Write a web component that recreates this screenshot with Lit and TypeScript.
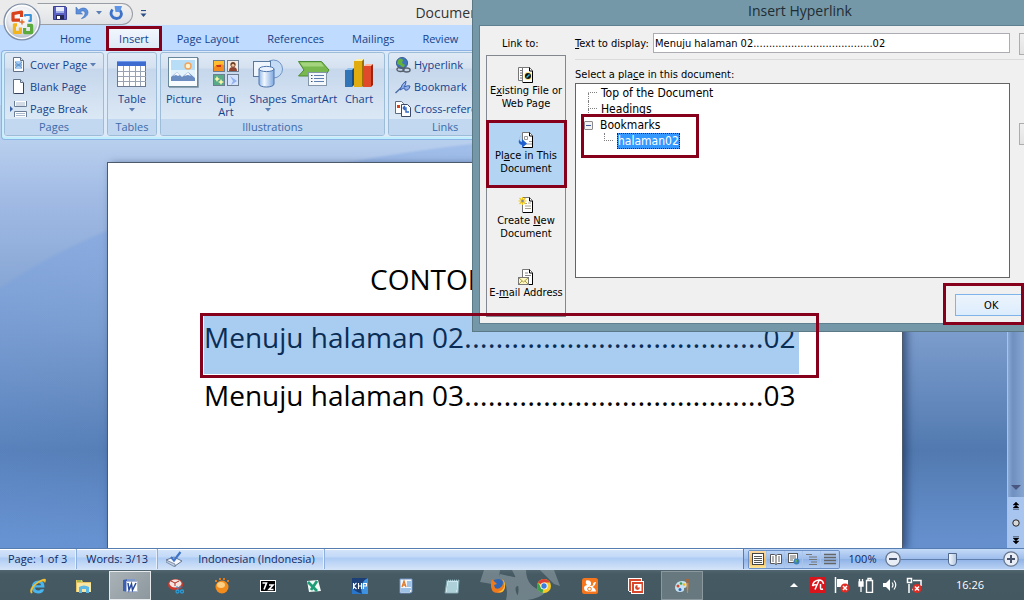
import { LitElement, html, css, svg } from "lit";
import { customElement } from "lit/decorators.js";

const icon = (w: number, h: number, body: unknown) =>
  html`<svg width=${w} height=${h} viewBox="0 0 ${w} ${h}" aria-hidden="true">${body}</svg>`;

const orb = icon(40, 40, svg`
  <defs>
    <radialGradient id="orb" cx=".5" cy=".35" r=".65">
      <stop offset="0" stop-color="#ffffff"/><stop offset=".6" stop-color="#e6e9ee"/><stop offset="1" stop-color="#a9b4c4"/>
    </radialGradient>
  </defs>
  <circle cx="20" cy="20" r="18" fill="url(#orb)" stroke="#7c8da5" stroke-width="1.2"/>
  <circle cx="20" cy="20" r="16.4" fill="none" stroke="#fff" stroke-width="1.2"/>
  <g fill="none" stroke-width="3.2" stroke-linejoin="round">
    <path d="M18 18.200h-7v-6.600l8.500-1.600v5" stroke="#d8431c"/>
    <path d="M23 14.600v-1.600h5.800v5.800h-2.400" stroke="#3d93d8" stroke-width="2.200"/>
    <path d="M15 22.800h-2.600v7.600h6v-5" stroke="#f4b41c"/>
    <path d="M22.600 26v4.600h7v-7.200h-4.400" stroke="#5aab3c"/>
  </g>
  <path d="M20 17.500v5M17.500 20h5" stroke="#e06a2a" stroke-width="1.400"/>`);

const save = icon(16, 16, svg`
  <path d="M1.500 1.500h12l1 1v12h-13z" fill="#5a5fc4" stroke="#3b3f92"/>
  <rect x="4" y="2" width="8" height="6" fill="#e8ecfb"/><path d="M4 6h8v2H4z" fill="#9fb0e8"/>
  <rect x="4" y="10" width="8" height="4.500" fill="#26284f"/><rect x="5" y="11" width="3" height="3" fill="#fff"/>`);
const undo = icon(14, 16, svg`
  <path d="M1 2v7h6.500L5.400 7c2-2 4.800-1.200 4.600 1.600-.2 2-1.600 3.400-3.600 5 4-.8 6.400-3 6.600-6C13.200 3 7.600 1.400 3.600 5z" fill="#5b8edb" stroke="#3f6fba" stroke-width=".6"/>`);
const redo = icon(15, 16, svg`
  <path d="M3.500 4.500C0 9 3.500 13.500 7.500 13.500S14.500 9 10.500 5" fill="none" stroke="#3c72c8" stroke-width="2.800"/>
  <path d="M5.500 1h7.500l-.5 1.800-2 4.200H6.500z" fill="#5f95e4"/>`);
const caret = icon(6, 4, svg`<path d="M0 0h6L3 3.500z" fill="#5b7fb4"/>`);
const customise = icon(7, 8, svg`<path d="M1 .5h5" stroke="#2c4f86" stroke-width="1.200"/><path d="M.5 3.500h6L3.500 7z" fill="#2c4f86"/>`);

const sheet = svg`<path d="M2.500.5h7l3 3v11h-10z" fill="#fff" stroke="#5f6f86"/><path d="M9.500.5v3h3" fill="#d5deea" stroke="#5f6f86"/>`;
const coverPage = icon(15, 16, svg`${sheet}<path d="M4 4h7v8H4z" fill="#a9cdf0"/><path d="M4 5l7 6M4 11l7-6M4 8h7" stroke="#4b86c6" stroke-width=".8"/>`);
const blankPage = icon(15, 16, svg`${sheet}<path d="M12.500 4v10.500h-9" stroke="#33415c" fill="none"/>`);
const pageBreak = icon(17, 16, svg`
  <path d="M0 5l3 3L0 11z" fill="#3a62a8"/>
  <path d="M4.500 0v5.500h12V0M4.500 16v-5.500h12V16" fill="#fff" stroke="#6b7c95"/>
  <path d="M6 2h9M6 4h9M6 12.500h9M6 14.500h9" stroke="#a8b8cf"/>`);
const table = icon(30, 30, svg`
  <rect x=".5" y="4.500" width="28" height="24" fill="#fff" stroke="#6a7891"/>
  <rect x="0" y="3" width="29" height="5" fill="#3e6bd0"/><path d="M0 3.500h29" stroke="#6f97ec"/>
  <path d="M6.500 8v20M12.500 8v20M18.500 8v20M23.500 8v20M1 13.500h28M1 18.500h28M1 23.500h28" stroke="#9aa3b4"/>`);
const picture = icon(32, 32, svg`
  <rect x=".5" y=".5" width="29" height="29" fill="#f8fbfd" stroke="#68879b"/>
  <rect x="3" y="3" width="24" height="21" fill="#b7ddf7"/><rect x="3" y="13" width="24" height="8" fill="#e4f2fb"/>
  <circle cx="20" cy="9" r="3" fill="#fff4d0" stroke="#f3a45c" stroke-width="1.400"/>
  <path d="M3 24v-4l6-5 5 5 6-5 7 6v3z" fill="#6b8dc2"/><path d="M9 15l-4 4 3-1 2 1 2-1zM20 15l-4 4 4-1 3 1z" fill="#f3f7fc"/>
  <path d="M1 30.500h29.500V1" stroke="#8fa2b4" fill="none"/>`);
const clipArt = icon(27, 27, svg`
  <g stroke="#6c7d8f"><rect x=".5" y=".5" width="11" height="11" fill="#ffbf30"/><rect x="14.500" y=".5" width="11" height="11" fill="#f4ece2"/>
  <rect x=".5" y="14.500" width="11" height="11" fill="#58ab88"/><rect x="14.500" y="14.500" width="11" height="11" fill="#d4e2fb"/></g>
  <path d="M1 7q5-4 10-2v6H1z" fill="#f58a1e"/><path d="M3 5h5v2H4z" fill="#c8341c"/>
  <circle cx="20" cy="4.500" r="2.600" fill="#6b3a24"/><circle cx="20" cy="5.200" r="1.500" fill="#f1c39a"/><path d="M16 11q0-4 4-4t4 4z" fill="#8e4430"/>
  <path d="M4 16l1 2 2 1-2 1-1 2-1-2-1.500-1 1.500-1zM8 19l1 2 2 1-2 1-1 2-1-2-2-1 2-1z" fill="#f8f4a8"/>
  <path d="M17 16l7 5-6 4 2-4z" fill="#8fb1ee"/>`);
const shapes = icon(31, 29, svg`
  <defs><linearGradient id="cyl"><stop stop-color="#8fb6e8"/><stop offset=".35" stop-color="#f2f8ff"/><stop offset="1" stop-color="#7ca6e0"/></linearGradient></defs>
  <circle cx="20.500" cy="10" r="9" fill="#c4dbf6" stroke="#6f93c4"/>
  <rect x=".5" y="2.500" width="17" height="15" fill="#eef5fd" stroke="#58789e"/>
  <path d="M6 10v15c0 4 15 4 15 0V10" fill="url(#cyl)" stroke="#4f76ac"/><ellipse cx="13.500" cy="10" rx="7.500" ry="2.600" fill="#eaf3fd" stroke="#4f76ac"/>`);
const smartArt = icon(32, 28, svg`
  <path d="M.5 2.500h23L31 11l-4 6H.5L6 11z" fill="#79b84f" stroke="#4c8a33"/><path d="M2 3.500h21l3 4H5z" fill="#a4d57e"/>
  <rect x="10.500" y="13.500" width="18" height="13" fill="#f5f8fb" stroke="#8497a8"/>
  <path d="M16 16.500h10M16 19.500h10M16 22.500h10" stroke="#5d7fae"/><path d="M13 16.500h1.500M13 19.500h1.500M13 22.500h1.500" stroke="#344f7a"/>`);
const chart = icon(29, 30, svg`
  <path d="M0 13l3-3h6l-2 3z" fill="#8ec2ee"/><rect y="12" width="7" height="17" fill="#2f75b8"/><path d="M7 12l2-2v17l-2 2z" fill="#164f86"/>
  <path d="M9 4l3-3h7l-2 3z" fill="#fff0a0"/><rect x="9" y="3" width="8" height="26" fill="#e0ac10"/><path d="M17 3l2-2v26l-2 2z" fill="#9b7100"/>
  <path d="M18 9l3-3h7l-2 3z" fill="#ffb59e"/><rect x="18" y="8" width="8" height="21" fill="#e0492c"/><path d="M26 8l2-2v21l-2 2z" fill="#9d2410"/>`);
const hyperlink = icon(16, 16, svg`
  <circle cx="7" cy="6" r="5.600" fill="#3f73bb" stroke="#284f88" stroke-width=".8"/><path d="M3 3q3-3 5 0l-1 3 3 2-2 3-3-3-3-1z" fill="#63b23a"/>
  <g fill="none" stroke="#56606d" stroke-width="1.300"><ellipse cx="5.500" cy="12.500" rx="3.600" ry="2"/><ellipse cx="11.500" cy="13" rx="3.600" ry="2"/></g>`);
const bookmark = icon(16, 16, svg`
  <path d="M.5 14L8 7" stroke="#4a6aa0" stroke-width="1.400"/><path d="M5 11q2-7 6-9 0 4-2 6 4-2 6-1-1 5-5 4 0-2-1-2-2 1-4 2z" fill="#8fb0ea" stroke="#3a5fae"/>`);
const crossRef = icon(16, 16, svg`
  <path d="M.5.5h6l2 2v10h-8z" fill="#fff" stroke="#5c6c84"/><rect x="2" y="4" width="3" height="3" fill="#d8431c"/>
  <path d="M6.500 3.500h6l3 3v9h-9z" fill="#fff" stroke="#3b4a66"/><path d="M8 7h3v4h3M8 7l2-2M8 7l2 2" stroke="#3567c0" fill="none" stroke-width="1.400"/>`);

const page16 = svg`<path d="M4.500.5h7l3 3v12h-10z" fill="#fff" stroke="#777"/><path d="M14.500 4v11.500H5" stroke="#000" fill="none"/><path d="M11.500.5v3.500h3" fill="none" stroke="#000"/>`;
const existingFile = icon(16, 16, svg`<path d="M.5.5h9v13h-9z" fill="#fff" stroke="#777"/><path d="M2 3.500h2M2 6h2M2 8.500h2M2 11h2" stroke="#777"/>${page16}
  <circle cx="10" cy="9" r="4" fill="#ffe98a"/><circle cx="10" cy="9" r="3" fill="#111"/><path d="M8 10l3-3 1 1-3 3z" fill="#35b8d8"/>`);
const placeIn = icon(16, 16, svg`${page16}<path d="M6.500 4.500h3v3h-3zM11 9.500h3M6 12h8" stroke="#999" fill="none"/>
  <path d="M3 3Q-1 9 4 10V7l5 4.500L4 16v-3Q-2 12 3 3z" fill="#1f5fd0"/>`);
const createNew = icon(16, 16, svg`${page16}<path d="M7 6.500h2M7 9h6M7 11.500h6M10 6h3" stroke="#aaa08a"/>
  <path d="M4.500 0v8M.5 4h8M1.500 1l6 6M7.500 1l-6 6" stroke="#f0c61c" stroke-width="1.200"/><circle cx="4.500" cy="4" r="1.200" fill="#888"/>`);
const email = icon(16, 16, svg`${page16}<path d="M7 4h3M7 6.500h6" stroke="#888"/>
  <rect x=".5" y="8.500" width="10" height="7" fill="#fff7c0" stroke="#777"/><path d="M1 9l4.500 4L10 9M1 15l3-3M10 15l-3-3" stroke="#a89d48" fill="none"/>`);

const proof = icon(17, 16, svg`
  <path d="M0 9l8-3 8 4-7 5z" fill="#f5f8fc" stroke="#63748e"/><path d="M0 9l9 4v3L0 11z" fill="#c0cde2" stroke="#63748e" stroke-width=".7"/>
  <path d="M5 6l3 3.500L14.500 1" fill="none" stroke="#3f74c8" stroke-width="2.200"/>`);
const viewPrint = icon(12, 12, svg`<rect x=".5" y=".5" width="11" height="11" fill="#fff" stroke="#444"/><path d="M2 3.500h8M2 5.500h8M2 7.500h8M2 9.500h8" stroke="#555"/>`);
const viewRead = icon(12, 12, svg`<path d="M.5 1.500h4l1.500 1 1.500-1h4v9h-4L6 11.500l-1.500-1h-4zM6 2.500v9" fill="#fff" stroke="#555"/><path d="M2 4h2M2 6h2M2 8h2M8 4h2M8 6h2M8 8h2" stroke="#666"/>`);
const viewWeb = icon(12, 12, svg`<rect x=".5" y=".5" width="9" height="9" fill="#fff" stroke="#555"/><path d="M2 3h6M2 5h6M2 7h3" stroke="#666"/><circle cx="8.500" cy="8.500" r="3" fill="#3c7fb8"/><path d="M7 7q2-1 2 1l-1 2z" fill="#69b548"/>`);
const viewOutline = icon(12, 12, svg`<path d="M0 1.500h6M3 4h8M3 6.500h8M5 9h6M3 11.500h8" stroke="#777"/>`);
const viewDraft = icon(12, 12, svg`<path d="M0 1.500h12M0 4.500h12M0 7.500h12M0 10.500h12" stroke="#666" stroke-width="1.400"/>`);
const zoomGlyph = (plus: boolean) => icon(16, 16, svg`
  <circle cx="8" cy="8" r="7.200" fill="#e9eef6" stroke="#66758c" stroke-width="1.300"/><path d="M4 8h8" stroke="#46536a" stroke-width="2"/>
  ${plus ? svg`<path d="M8 4v8" stroke="#46536a" stroke-width="2"/>` : ""}`);

const taskIcons: { name: string; state?: string; art: unknown }[] = [
  { name: "Internet Explorer", art: svg`<path d="M14.500 9.500H5q.3 3 3.200 3 1.900 0 2.600-1.300h3.300Q13 15.500 8.300 15.500q-6.300 0-6.600-6.500.4-6.500 6.800-6.500 6.500 0 6 7zM5 7.300h6.200Q10.800 5 8.300 5T5 7.300z" fill="#49b5ee"/><path d="M1 15.500Q-2 11 6 5q7-5 9.500-4 1 1-.5 4Q14 1 7 6 1 11 2.500 15z" fill="#f2c02c"/>` },
  { name: "File Explorer", art: svg`<path d="M0 2h6l1 2h8v10H0z" fill="#e8c561"/><path d="M1 5h14v9H1z" fill="#f8e7a4"/><path d="M3 15V9q5-3 10 0v6h-3v-4H6v4z" fill="#5cb8e4"/><path d="M1 3h4" stroke="#5caf3d"/>` },
  { name: "Word", state: "active", art: svg`<path d="M1 2l5-1v13l-5-1z" fill="#3e60b4"/><path d="M5 1h8v2H5z" fill="#7d97cf"/><rect x="4.500" y="3.500" width="11" height="10" fill="#fff" stroke="#aab8d8"/><path d="M6 5l1 7 2.500-6 1 6L14 5" fill="none" stroke="#2a4b9b" stroke-width="1.500"/>` },
  { name: "Disk tool", art: svg`<ellipse cx="7.500" cy="6.500" rx="7.500" ry="5.500" fill="#d03a2c"/><ellipse cx="7.500" cy="5.500" rx="6" ry="4" fill="#f3e6e0"/><path d="M7 5L3 3M7 5l4-2M7 5v3" stroke="#b02a20"/><path d="M8 9h2v2l-1 1M13 9h-2" stroke="#2a9cd8" fill="none"/><circle cx="9.500" cy="13.500" r="1.500" fill="none" stroke="#2a9cd8" stroke-width="1.300"/><circle cx="14" cy="13.500" r="1.500" fill="none" stroke="#2a9cd8" stroke-width="1.300"/>` },
  { name: "GOM Player", art: svg`<circle cx="8" cy="9" r="6.500" fill="#f28c1c"/><ellipse cx="7" cy="7" rx="4" ry="3" fill="#fdd083"/><path d="M1 2h2v2H1zM5 0h2v2H5zM9 0h2v2H9zM13 2h2v2h-2z" fill="#e07a18"/>` },
  { name: "7-Zip", art: svg`<rect x=".5" y="2.500" width="15" height="11" fill="#000" stroke="#fff"/><path d="M2.500 5h4L4 11.500M9 7h4l-4 4.500h4.500" fill="none" stroke="#fff" stroke-width="1.600"/>` },
  { name: "Excel", art: svg`<path d="M1 3l11-1 3 11-12 1z" fill="#f2f8f4"/><path d="M2 4l9 9M11 3L5 12" stroke="#1e9c78" stroke-width="2.800"/>` },
  { name: "KMPlayer", art: svg`<rect width="16" height="16" fill="#1c3f78"/><path d="M16 0Q7 4 10 16h6z" fill="#3e92e0"/><path d="M0 10q6 6 14 6H0z" fill="#2a76c8"/><path d="M1.500 5v6M4.500 5l-3 3 3 3M6.500 11V5M9.500 11V5M6.500 8h3M11.500 11V5.500h3V8h-3" stroke="#fff" fill="none" stroke-width="1.100"/>` },
  { name: "WordPad", art: svg`<path d="M2 1h12v13l-2 1H2z" fill="#f3f7fc" stroke="#6f96c8"/><path d="M4 9l2-6 2 6M4.500 7h3" stroke="#e07a28" fill="none" stroke-width="1.300"/><path d="M9 4h4M9 6h4M9 8h4M3 11h10M3 13h9" stroke="#4b8ed0"/>` },
  { name: "Notepad", art: svg`<path d="M3 2h12l-1 13H1z" fill="#cfe8ee" stroke="#7da3ad"/><path d="M4 5h9M4 7h9M3 9h10M3 11h10M3 13h9" stroke="#8cbac4"/><path d="M3 1.500h12" stroke="#555" stroke-dasharray="1 1" stroke-width="2"/>` },
  { name: "Firefox", art: svg`<circle cx="8" cy="8" r="7" fill="#2f66b4"/><path d="M1 5Q0 15 8 15q8 0 7-9-1-4-3-5 2 4 0 7-3 4-7 2l-1-3 3-1-2-2Q2 2 3 1 1 2 1 5z" fill="#ee7a1c"/><path d="M12 1q4 5 1 10-2 3-5 3 7 2 7-8-1-4-3-5z" fill="#f9c838"/>` },
  { name: "Chrome", art: svg`<circle cx="8" cy="8" r="7" fill="#f6c928"/><path d="M8 8L1.900 4.500A7 7 0 0 1 14 4.500H8z" fill="#dd4136"/><path d="M8 8l-1.500 6.900A7 7 0 0 1 1.900 4.500L5 9.500z" fill="#3da14c"/><circle cx="8" cy="8" r="3.600" fill="#fff"/><circle cx="8" cy="8" r="2.700" fill="#3c7ee0"/>` },
  { name: "UC Browser", art: svg`<rect width="16" height="16" rx="2.500" fill="#f5761c"/><path d="M4 2.500q4-1 5 2 .5 2-1 3.500 4 0 3-2.500 1-2 3-1.500-1 4-3.500 5 3 1 3.500 4.500H6q-4 0-4-3.500 0-2.500 3-3Q3 4.500 4 2.500z" fill="#fff"/><circle cx="7.500" cy="11" r="1.800" fill="none" stroke="#f5761c"/>` },
  { name: "Office viewer", art: svg`<path d="M1 13V1h12v2M1 13h3" fill="none" stroke="#fff" stroke-width="2"/><path d="M2 13V2h11" fill="none" stroke="#d8482c" stroke-width="2"/><rect x="3.500" y="3.500" width="12" height="12" fill="#d8482c" stroke="#fff"/><rect x="6" y="6" width="7.500" height="7" fill="#fff"/><circle cx="9.500" cy="9.500" r="2.400" fill="#d8482c"/><path d="M9.500 9.500V7h2.500v2.500z" fill="#fff"/>` },
  { name: "Paint", state: "running", art: svg`<path d="M1 9q1-6 7-6 5 0 5 4 0 3-3 3 1 4-4 4-5 0-5-5z" fill="#c4e2f2"/><circle cx="4" cy="8" r="1.500" fill="#d8482c"/><circle cx="7" cy="5.500" r="1.300" fill="#3da14c"/><circle cx="10" cy="6.500" r="1.300" fill="#f0b81c"/><circle cx="6" cy="11.500" r="1.500" fill="#2f66b4"/><path d="M12.500 5h2l-.5 10h-1z" fill="#e8801c"/><path d="M12 1h3l-.5 4h-2z" fill="#a8683a"/>` },
];

const trayIcons: { name: string; art: unknown }[] = [
  { name: "Avira", art: svg`<rect width="16" height="16" fill="#d8151c"/><path d="M2.500 9Q3 3.500 9 3q4 0 4.500 4M2.500 9Q5 7 7 8.500M9 3.500L5 12.500M10.500 7v4q0 2 2.500 1" fill="none" stroke="#fff" stroke-width="1.500"/>` },
  { name: "Action Center", art: svg`<path d="M1.500 0v16" stroke="#fff" stroke-width="1.500"/><path d="M3 2h6l1 1h4v7H3z" fill="#fff"/><circle cx="11" cy="11" r="4.500" fill="#e02c24"/><path d="M9 9l4 4M13 9l-4 4" stroke="#fff" stroke-width="1.500"/>` },
  { name: "Power", art: svg`<path d="M8.500 3.500h6v12h-6zM10 1.500h3v2h-3z" fill="none" stroke="#fff" stroke-width="1.400"/><path d="M1.500 2v3M4.500 2v3M1 5h4v4H1zM3 9v6" stroke="#fff" fill="#fff" stroke-width="1.300"/>` },
  { name: "Volume", art: svg`<path d="M1 6h3l4-4v12l-4-4H1z" fill="#fff"/><path d="M10 5.500q2 2.500 0 5M12 3.500q3.500 4.500 0 9" stroke="#fff" fill="none" stroke-width="1.200"/>` },
  { name: "Network", art: svg`<path d="M3 7v9M1.500 1.500h4v4h-4zM7 3.500h8V9M6 12.500h3" fill="none" stroke="#fff" stroke-width="1.500"/><circle cx="11" cy="11.500" r="4.500" fill="#e02c24"/><path d="M9 9.500l4 4M13 9.500l-4 4" stroke="#fff" stroke-width="1.500"/>` },
];

const dots = ".".repeat(38);

@customElement("insert-hyperlink-dialog")
class InsertHyperlinkDialog extends LitElement {
  static styles = css`
    :host {
      display: block;
      box-sizing: border-box;
      width: 656px;
      padding: 0 6px 7px;
      background: #7498a8;
      border: 1px solid #5a7886;
      border-top: 0;
      font: 11px/13px "DejaVu Sans Condensed", "DejaVu Sans", sans-serif;
      font-stretch: condensed;
      color: #000;
    }
    * { box-sizing: border-box; }
    h2 {
      margin: 0;
      height: 25px;
      font: 14px/22px "Open Sans", sans-serif;
      text-align: center;
      color: #1f2d33;
    }
    button { font: inherit; color: inherit; cursor: default; }
    .body {
      display: grid;
      grid-template-columns: 80px 1fr;
      column-gap: 9px;
      height: 299px;
      padding: 7px 14px 7px 6px;
      background: #f0f0f0;
      border: 1px solid #5f8090;
    }
    .side { display: flex; flex-direction: column; }
    .side-title { height: 22px; padding: 4px 0 0 16px; }
    .places {
      flex: 1;
      display: grid;
      grid-template-rows: repeat(4, 65px);
      border: 1px solid #828790;
    }
    .place {
      display: flex;
      flex-direction: column;
      align-items: center;
      justify-content: center;
      gap: 1px;
      margin: 0 -4px;
      padding: 0;
      border: 0;
      background: none;
      text-align: center;
    }
    .place.current { margin: 0; background: #b3d5f3; }
    .place span { white-space: pre-line; }
    .main { display: grid; grid-template-columns: 435px 1fr; column-gap: 9px; align-content: start; }
    .display { display: flex; align-items: center; gap: 4px; height: 20px; }
    .display label { flex: none; width: 74px; white-space: nowrap; }
    .display input {
      flex: 1;
      min-width: 0;
      height: 20px;
      padding: 0 1px;
      border: 1px solid #abadb3;
      background: #fff;
      font: inherit;
      color: #000;
      outline: 0;
    }
    .side-button {
      height: 22px;
      border: 1px solid #adadad;
      background: linear-gradient(#f0f0f0, #e3e3e3);
    }
    .rule { grid-column: 1 / -1; height: 1px; margin-top: 4px; background: #dcdcdc; }
    .tree-label { grid-column: 1 / -1; height: 23px; padding-top: 8px; }
    .tree {
      height: 195px;
      margin: 0;
      padding: 1px 8px;
      list-style: none;
      background: #fff;
      border: 1px solid #646464;
      font-size: 12px;
      line-height: 16px;
    }
    .tree ul { margin: 0; padding: 0 0 0 16px; list-style: none; }
    .row { display: flex; height: 16px; align-items: stretch; }
    .joint { width: 13px; margin-left: 4px; display: grid; grid-template: 8px 8px / 9px; }
    .joint::before { content: ""; border-left: 1px dotted #808080; border-bottom: 1px dotted #808080; }
    .joint::after { content: ""; border-left: 1px dotted #808080; }
    .joint.first::before { border-left-color: transparent; }
    .joint.last::after { display: none; }
    .toggle {
      width: 9px;
      height: 9px;
      margin: 4px 7px 0 0;
      padding: 3px 1px;
      border: 1px solid #8a8a8a;
      border-radius: 1px;
      background: linear-gradient(#3c5a9a, #3c5a9a) center / 5px 1px no-repeat #f3f3f3;
    }
    .chosen { padding: 0 1px; color: #fff; background: #3399ff; outline: 1px dotted #222; outline-offset: -1px; }
    .remove { align-self: start; margin-top: 40px; }
    .actions { grid-column: 1 / -1; display: flex; gap: 6px; padding: 16px 0 0 380px; }
    .actions button { width: 73px; height: 22px; border: 1px solid #7eb4ea; background: linear-gradient(#ecf4fc, #dcecfc); }
    .actions .cancel { border-color: #adadad; background: #e8e8e8; }
  `;
  render() {
    return html`
      <h2>Insert Hyperlink</h2>
      <div class="body">
        <nav class="side">
          <div class="side-title">Link to:</div>
          <div class="places">
            <button class="place">${existingFile}<span>E<u>x</u>isting File or${"\n"}Web Page</span></button>
            <button class="place current">${placeIn}<span>Pl<u>a</u>ce in This${"\n"}Document</span></button>
            <button class="place">${createNew}<span>Create <u>N</u>ew${"\n"}Document</span></button>
            <button class="place">${email}<span>E-<u>m</u>ail Address</span></button>
          </div>
        </nav>
        <div class="main">
          <div class="display">
            <label for="display"><u>T</u>ext to display:</label>
            <input id="display" type="text" .value=${`Menuju halaman 02${dots}02`} />
          </div>
          <button class="side-button" aria-label="ScreenTip"></button>
          <div class="rule"></div>
          <div class="tree-label" id="tree-label">Select a pla<u>c</u>e in this document:</div>
          <ul class="tree" aria-labelledby="tree-label">
            <li class="row"><span class="joint first"></span>Top of the Document</li>
            <li class="row"><span class="joint"></span>Headings</li>
            <li>
              <div class="row"><button class="toggle" aria-label="Collapse"></button>Bookmarks</div>
              <ul><li class="row"><span class="joint last"></span><span class="chosen">halaman02</span></li></ul>
            </li>
          </ul>
          <button class="side-button remove" aria-label="Remove Link"></button>
          <div class="actions"><button>OK</button><button class="cancel" aria-label="Cancel"></button></div>
        </div>
      </div>`;
  }
}

@customElement("app-root")
class AppRoot extends LitElement {
  static styles = css`
    :host {
      position: relative;
      display: flex;
      flex-direction: column;
      height: 100vh;
      overflow: hidden;
      font: 11px/14px "Open Sans", "Noto Sans", sans-serif;
      color: #15428b;
    }
    * { box-sizing: border-box; }
    svg { display: block; flex: none; }
    button { font: inherit; color: inherit; border: 0; padding: 0; background: none; cursor: default; }

    .titlebar { display: grid; grid-template-columns: 1fr auto 1fr; height: 25px; background: #ebebeb; }
    .quick { display: flex; align-items: center; padding: 2px 0 1px 37px; }
    .qat {
      display: flex;
      align-items: center;
      gap: 7px;
      width: 96px;
      height: 22px;
      padding: 0 0 2px 14px;
      border: 1px solid #9a9ea5;
      border-left-color: transparent;
      border-radius: 0 12px 12px 0;
      background: linear-gradient(#f1f1f1, #dfe2e6);
    }
    .customise { margin-left: 7px; }
    .title { padding-right: 4px; font-size: 14px; line-height: 26px; color: #333; }
    .orb { position: absolute; left: 2px; top: 2px; }

    .tabs { display: flex; gap: 8px; height: 25px; padding: 2px 0 0 50px; background: #bfdbff; }
    .tab { padding: 0 10px; border-radius: 3px 3px 0 0; }
    .tab.current { background: linear-gradient(#f4f8fd, #dce8f6); }

    .ribbon {
      display: flex;
      gap: 3px;
      height: 90px;
      padding: 1px 2px 3px;
      margin: 0 0 0 1px;
      border: 1px solid #8db2e3;
      border-right: 0;
      border-radius: 4px 0 0 4px;
      background: #dbe9f8;
      box-shadow: inset 0 -2px 0 #bdf0fc, inset 1px 0 0 #c8eefc;
    }
    .header { background: linear-gradient(#bfdbff 75%, #b9cfee 75%); }
    .group {
      display: flex;
      flex-direction: column;
      border: 1px solid #9dbcd8;
      border-radius: 3px;
      background: linear-gradient(#e0eaf6 0, #d5e1f0 15px, #c6d7ec 16px, #dbe8f5 66px);
    }
    .group-body { flex: 1; min-height: 0; display: flex; }
    .group-name { height: 16px; line-height: 16px; text-align: center; color: #3e6aaa; background: #c1d8f0; border-radius: 0 0 2px 2px; }
    .pages { width: 100px; }
    .tables { width: 50px; }
    .illustrations { width: 225px; }
    .links { flex: 1; }
    .links .group-name { padding-left: 43px; text-align: left; }
    .stack { display: flex; flex-direction: column; padding: 1px 0 0 5px; }
    .small { display: grid; flex: none; grid-template-columns: 17px auto auto; align-items: center; justify-content: start; justify-items: center; column-gap: 3px; height: 22px; white-space: nowrap; }
    .large { display: flex; flex-direction: column; align-items: center; gap: 3px; height: 66px; padding-top: 4px; line-height: 13px; }
    .large .art { display: grid; place-items: center; height: 32px; }
    .large span { white-space: pre-line; }
    .tables .large { width: 48px; }
    .illustrations .group-body { display: grid; grid-template-columns: 46px 38px 46px 46px 44px; }

    .desk {
      flex: 1;
      min-height: 0;
      display: grid;
      grid-template-columns: 1fr 17px;
      background:
        radial-gradient(ellipse 800px 300px at 700px 290px, transparent 50%, rgba(110, 155, 225, .3) 99%, transparent 100%),
        linear-gradient(#b9cfee 0, #a0bae4 60px, #7c9dcd 190px, #527ab0 310px, #6590cd 400px);
    }
    .sheet-area { padding: 22px 104px 0 107px; overflow: hidden; }
    .sheet {
      height: 100%;
      padding: 95px 96px 0;
      background: #fff;
      border: 1px solid #4c5a6c;
      border-width: 1px 1px 0;
      box-shadow: 4px 2px 8px rgba(20, 40, 80, .6);
      color: #000;
      font-size: 28px;
      line-height: 42px;
    }
    .sheet p { height: 58px; margin: 0; white-space: nowrap; }
    .leader { font-size: 30px; line-height: 40px; }
    .sheet .heading { padding-left: 166px; }
    .sheet .selected { background: #a9cdf1; color: #0a2c55; margin: 0 7px 0 0; }
    .scroll { display: flex; flex-direction: column; border-left: 1px solid #a9c4ea; }
    .track { flex: 1; display: flex; justify-content: center; align-items: end; padding-bottom: 6px; background: linear-gradient(90deg, #88a8d6, #6f90c0 30%, #86a5d2); }
    .browse { display: flex; flex-direction: column; align-items: center; justify-content: space-around; height: 51px; background: #a8c5f0; }

    .status {
      display: flex;
      height: 22px;
      padding-bottom: 1px;
      border-top: 1px solid #567db1;
      background: linear-gradient(#fff 0 1px, #d3e3f9 1px, #c2d9f8 8px, #adcbf4 9px, #d6e5f8 21px);
      color: #102a63;
    }
    .cell { display: flex; align-items: center; padding: 0 9px 0 8px; border-right: 1px solid #8fb0dd; box-shadow: inset -1px 0 #e6f0fc; }
    .cell.words { padding: 0 9px; }
    .cell.lang { padding-left: 15px; }
    .cell.proof { padding-right: 0; border: 0; box-shadow: none; }
    .tools { display: flex; align-items: center; flex: none; width: 281px; margin-left: auto; border-left: 1px solid #567db1; background: linear-gradient(#c4daf8, #9dbdec 50%, #8fb2e6 50%, #b8d1f4); }
    .views { display: flex; height: 19px; margin-left: 4px; border: 1px solid #6b90c8; border-radius: 2px; }
    .view { display: grid; place-items: center; width: 18px; border-right: 1px solid #a9c4ea; }
    .view.on { background: linear-gradient(#fbdba8, #f5b64d 60%, #ffe79a); }
    .percent { width: 45px; text-align: center; }
    .zoom { flex: 1; min-width: 0; margin: 0; height: 16px; appearance: none; background: linear-gradient(#5f7fae, #5f7fae) center / 100% 1px no-repeat; }
    .zoom::-webkit-slider-thumb {
      appearance: none;
      width: 9px;
      height: 13px;
      background: linear-gradient(90deg, #f4f8fd, #b6c8e2);
      border: 1px solid #51688d;
      border-radius: 1px 1px 5px 5px;
    }
    .plus { margin-right: 5px; }

    .taskbar { position: relative; display: flex; align-items: stretch; height: 30px; background: linear-gradient(#52666f, #465a64 4px, #435861); color: #fff; }
    .wall { position: absolute; left: 480px; top: 0; }
    .tasks { position: relative; display: flex; gap: 4px; padding-left: 17px; }
    .task { display: grid; place-items: center; width: 42px; height: 29px; margin-top: 1px; }
    .task.active { background: linear-gradient(135deg, #a9b2b7, #8c989e); border: 1px solid #e6eaec; }
    .task.running { background: #67797f; border: 1px solid #8b999f; }
    .tray { display: flex; align-items: center; gap: 8px; margin-left: auto; }
    .tray > svg { margin-right: 4px; }
    .clock { width: 87px; margin-left: 7px; padding-left: 19px; }

    .dialog { position: absolute; left: 472px; top: 0; }
    .mark { position: absolute; border: 3px solid #86001c; pointer-events: none; }
    .mark-insert { left: 106px; top: 26px; width: 56px; height: 25px; }
    .mark-place { left: 486px; top: 120px; width: 81px; height: 68px; }
    .mark-bookmark { left: 581px; top: 114px; width: 118px; height: 44px; }
    .mark-ok { left: 943px; top: 283px; width: 81px; height: 42px; }
    .mark-line { left: 200px; top: 313px; width: 619px; height: 65px; }
  `;
  render() {
    const small = (art: unknown, text: string, menu = false) =>
      html`<button class="small">${art}<span>${text}</span>${menu ? caret : ""}</button>`;
    const large = (art: unknown, text: string, menu = false) =>
      html`<button class="large"><span class="art">${art}</span><span>${text}</span>${menu ? caret : ""}</button>`;
    return html`
      <header class="header">
        <div class="titlebar">
          <div class="quick">
            <div class="qat">
              <button aria-label="Save">${save}</button>
              <button aria-label="Undo">${undo}</button>
              ${caret}
              <button aria-label="Repeat">${redo}</button>
            </div>
            <button class="customise" aria-label="Customise toolbar">${customise}</button>
          </div>
          <div class="title">Document1 - Microsoft Word</div>
        </div>
        <nav class="tabs">
          ${["Home", "Insert", "Page Layout", "References", "Mailings", "Review"].map(
            (t) => html`<button class="tab ${t === "Insert" ? "current" : ""}">${t}</button>`)}
        </nav>
        <div class="ribbon">
          <section class="group pages">
            <div class="group-body stack">
              ${small(coverPage, "Cover Page", true)}${small(blankPage, "Blank Page")}${small(pageBreak, "Page Break")}
            </div>
            <div class="group-name">Pages</div>
          </section>
          <section class="group tables">
            <div class="group-body">${large(table, "Table", true)}</div>
            <div class="group-name">Tables</div>
          </section>
          <section class="group illustrations">
            <div class="group-body">
              ${large(picture, "Picture")}${large(clipArt, "Clip\nArt")}${large(shapes, "Shapes", true)}
              ${large(smartArt, "SmartArt")}${large(chart, "Chart")}
            </div>
            <div class="group-name">Illustrations</div>
          </section>
          <section class="group links">
            <div class="group-body stack">
              ${small(hyperlink, "Hyperlink")}${small(bookmark, "Bookmark")}${small(crossRef, "Cross-reference")}
            </div>
            <div class="group-name">Links</div>
          </section>
        </div>
      </header>
      <button class="orb" aria-label="Office Button">${orb}</button>

      <main class="desk">
        <div class="sheet-area">
          <article class="sheet">
            <p class="heading">CONTOH</p>
            <p class="selected">Menuju halaman 02<span class="leader">${dots}</span>02</p>
            <p>Menuju halaman 03<span class="leader">${dots}</span>03</p>
          </article>
        </div>
        <div class="scroll">
          <div class="track">${icon(10, 6, svg`<path d="M0 0h10L5 5z" fill="#4a5680"/>`)}</div>
          <div class="browse">
            ${icon(8, 8, svg`<path d="M4 0l3 3H1zM4 3l3 3H1zM1 7.500h6" fill="#000" stroke="#000" stroke-width=".4"/>`)}
            ${icon(8, 8, svg`<circle cx="4" cy="4" r="3.200" fill="#d8d8d8" stroke="#222"/>`)}
            ${icon(8, 8, svg`<path d="M1 .5h6M4 5L1 2h6zM4 8L1 5h6z" fill="#000" stroke="#000" stroke-width=".4"/>`)}
          </div>
        </div>
      </main>

      <footer class="status">
        <div class="cell">Page: 1 of 3</div>
        <div class="cell words">Words: 3/13</div>
        <div class="cell proof">${proof}</div>
        <div class="cell lang">Indonesian (Indonesia)</div>
        <div class="tools">
          <div class="views">
            ${[viewPrint, viewRead, viewWeb, viewOutline, viewDraft].map(
              (v, i) => html`<button class="view ${i === 0 ? "on" : ""}" aria-label="View ${i + 1}">${v}</button>`)}
          </div>
          <div class="percent">100%</div>
          <button aria-label="Zoom out">${zoomGlyph(false)}</button>
          <input class="zoom" type="range" min="0" max="100" value="50" aria-label="Zoom" />
          <button class="plus" aria-label="Zoom in">${zoomGlyph(true)}</button>
        </div>
      </footer>

      <footer class="taskbar">
        <div class="wall">${icon(80, 30, svg`<g fill="#8d9ca3" opacity=".6"><path d="M4 0h16l-2 15L0 12zM20 4l28 6v8q-20-8-8 12H26Q30 12 18 10zM32 0h14q0 18 20 22-10 10-32 8 10-8-2-30zM60 0h14l6 16-6-2z"/></g>`)}</div>
        <div class="tasks">
          ${taskIcons.map((t) => html`<button class="task ${t.state ?? ""}" aria-label=${t.name}>${icon(16, 16, t.art)}</button>`)}
        </div>
        <div class="tray">
          ${icon(8, 4, svg`<path d="M4 0l4 4H0z" fill="#fff"/>`)}
          ${trayIcons.map((t) => html`<button aria-label=${t.name}>${icon(16, 16, t.art)}</button>`)}
          <time class="clock">16:26</time>
        </div>
      </footer>

      <insert-hyperlink-dialog class="dialog"></insert-hyperlink-dialog>
      <div class="mark mark-insert"></div>
      <div class="mark mark-place"></div>
      <div class="mark mark-bookmark"></div>
      <div class="mark mark-ok"></div>
      <div class="mark mark-line"></div>`;
  }
}
